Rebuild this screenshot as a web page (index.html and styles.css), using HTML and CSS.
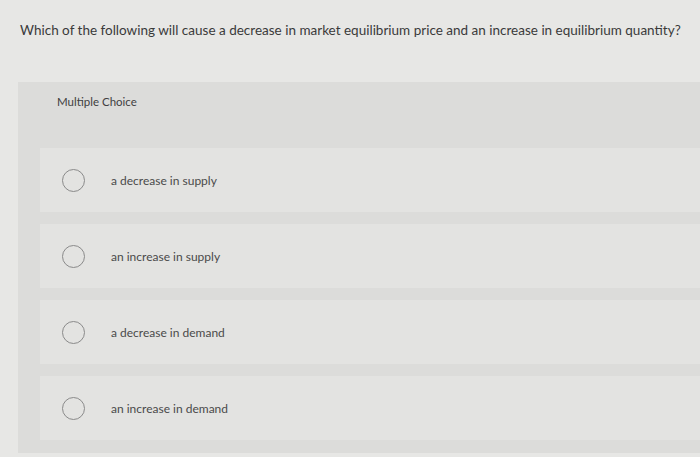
FILE: index.html
```html
<!DOCTYPE html>
<html>
<head>
<meta charset="utf-8">
<link rel="stylesheet" href="styles.css">
</head>
<body>
<div class="page">
  <p class="question">Which of the following will cause a decrease in market equilibrium price and an increase in equilibrium quantity?</p>
  <section class="panel">
    <div class="label">Multiple Choice</div>
    <div class="options">
      <div class="option"><span class="radio"></span><span class="text">a decrease in supply</span></div>
      <div class="option"><span class="radio"></span><span class="text">an increase in supply</span></div>
      <div class="option"><span class="radio"></span><span class="text">a decrease in demand</span></div>
      <div class="option"><span class="radio"></span><span class="text">an increase in demand</span></div>
    </div>
  </section>
</div>
</body>
</html>
```

FILE: styles.css
```css
html, body {
  margin: 0;
  padding: 0;
  background: #e7e7e5;
}
body {
  width: 700px;
  height: 457px;
  overflow: hidden;
  font-family: Lato, "Open Sans", sans-serif;
}
.page {
  padding-top: 21px;
}
.question {
  margin: 0 0 0 20px;
  font-size: 13.5px;
  line-height: 18px;
  color: #3a3a3a;
  white-space: nowrap;
}
.panel {
  margin: 43px 0 0 18px;
  background: #dcdcda;
  height: 371px;
  box-sizing: border-box;
  padding: 12px 0 0 22px;
}
.label {
  margin-left: 17px;
  font-size: 11.5px;
  line-height: 16px;
  color: #3f3f3f;
}
.options {
  margin-top: 38px;
  display: flex;
  flex-direction: column;
  gap: 12px;
}
.option {
  height: 64px;
  background: #e3e3e1;
  display: flex;
  align-items: center;
}
.radio {
  width: 21px;
  height: 21px;
  border: 1.5px solid #8a8a8a;
  border-radius: 50%;
  margin-left: 22px;
  flex: none;
}
.text {
  margin-left: 26px;
  font-size: 12px;
  color: #4a4a4a;
}
```
